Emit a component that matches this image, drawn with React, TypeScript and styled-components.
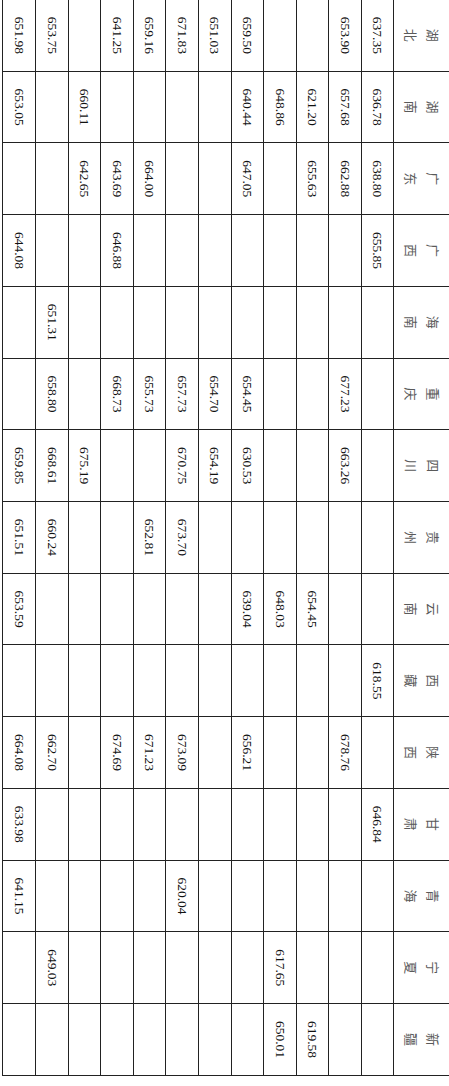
import React from 'react';
import styled, { createGlobalStyle } from 'styled-components';

const GlobalStyle = createGlobalStyle`
  html, body {
    margin: 0;
    padding: 0;
    background: #ffffff;
  }
  body {
    width: 449px;
    height: 1086px;
    overflow: hidden;
  }
`;

const Page = styled.div`
  width: 449px;
  height: 1086px;
  overflow: hidden;
  background: #ffffff;
`;

/* The scanned table is printed sideways: the whole sheet is turned a quarter turn clockwise */
const Sheet = styled.div`
  width: 1086px;
  height: 449px;
  transform-origin: 0 0;
  transform: translateX(449px) rotate(90deg);
`;

const Table = styled.table`
  border-collapse: collapse;
  table-layout: fixed;
  width: 1077px;
  margin-left: -1px;
  font-family: "Liberation Serif", "Times New Roman", serif;
  color: #111;
`;

const Row = styled.tr<{ $h: number }>`
  height: ${(p) => p.$h}px;
`;

const HeadCell = styled.th`
  border: 1px solid #222;
  border-top: none;
  padding: 0;
  text-align: center;
  vertical-align: middle;
  font-family: "Noto Sans CJK SC", "Noto Sans", sans-serif;
  font-weight: 400;
  font-size: 13px;
  line-height: 22px;
  color: #5a5a5a;
`;

const HeadChars = styled.div`
  display: flex;
  flex-direction: column;
  align-items: center;
`;

const Cell = styled.td`
  border: 1px solid #222;
  padding: 0;
  text-align: center;
  vertical-align: middle;
  font-size: 13.5px;
  line-height: 1;
  white-space: nowrap;
`;

type Column = { name: string; values: string[] };

const e = '';

const columns: Column[] = [
  { name: '湖北', values: ['637.35', '653.90', e, e, '659.50', '651.03', '671.83', '659.16', '641.25', e, '653.75', '651.98'] },
  { name: '湖南', values: ['636.78', '657.68', '621.20', '648.86', '640.44', e, e, e, e, '660.11', e, '653.05'] },
  { name: '广东', values: ['638.80', '662.88', '655.63', e, '647.05', e, e, '664.00', '643.69', '642.65', e, e] },
  { name: '广西', values: ['655.85', e, e, e, e, e, e, e, '646.88', e, e, '644.08'] },
  { name: '海南', values: [e, e, e, e, e, e, e, e, e, e, '651.31', e] },
  { name: '重庆', values: [e, '677.23', e, e, '654.45', '654.70', '657.73', '655.73', '668.73', e, '658.80', e] },
  { name: '四川', values: [e, '663.26', e, e, '630.53', '654.19', '670.75', e, e, '675.19', '668.61', '659.85'] },
  { name: '贵州', values: [e, e, e, e, e, e, '673.70', '652.81', e, e, '660.24', '651.51'] },
  { name: '云南', values: [e, e, '654.45', '648.03', '639.04', e, e, e, e, e, e, '653.59'] },
  { name: '西藏', values: ['618.55', e, e, e, e, e, e, e, e, e, e, e] },
  { name: '陕西', values: [e, '678.76', e, e, '656.21', e, '673.09', '671.23', '674.69', e, '662.70', '664.08'] },
  { name: '甘肃', values: ['646.84', e, e, e, e, e, e, e, e, e, e, '633.98'] },
  { name: '青海', values: [e, e, e, e, e, e, '620.04', e, e, e, e, '641.15'] },
  { name: '宁夏', values: [e, e, e, '617.65', e, e, e, e, e, e, '649.03', e] },
  { name: '新疆', values: [e, e, '619.58', '650.01', e, e, e, e, e, e, e, e] },
];

const ROWS = 12;

export default function App() {
  return (
    <Page>
      <GlobalStyle />
      <Sheet>
        <Table>
          <tbody>
            <Row $h={55}>
              {columns.map((c) => (
                <HeadCell key={c.name}>
                  <HeadChars>
                    {Array.from(c.name).map((ch, i) => (
                      <span key={i}>{ch}</span>
                    ))}
                  </HeadChars>
                </HeadCell>
              ))}
            </Row>
            {Array.from({ length: ROWS }).map((_, r) => (
              <Row $h={32.6} key={r}>
                {columns.map((c) => (
                  <Cell key={c.name}>{c.values[r]}</Cell>
                ))}
              </Row>
            ))}
          </tbody>
        </Table>
      </Sheet>
    </Page>
  );
}
